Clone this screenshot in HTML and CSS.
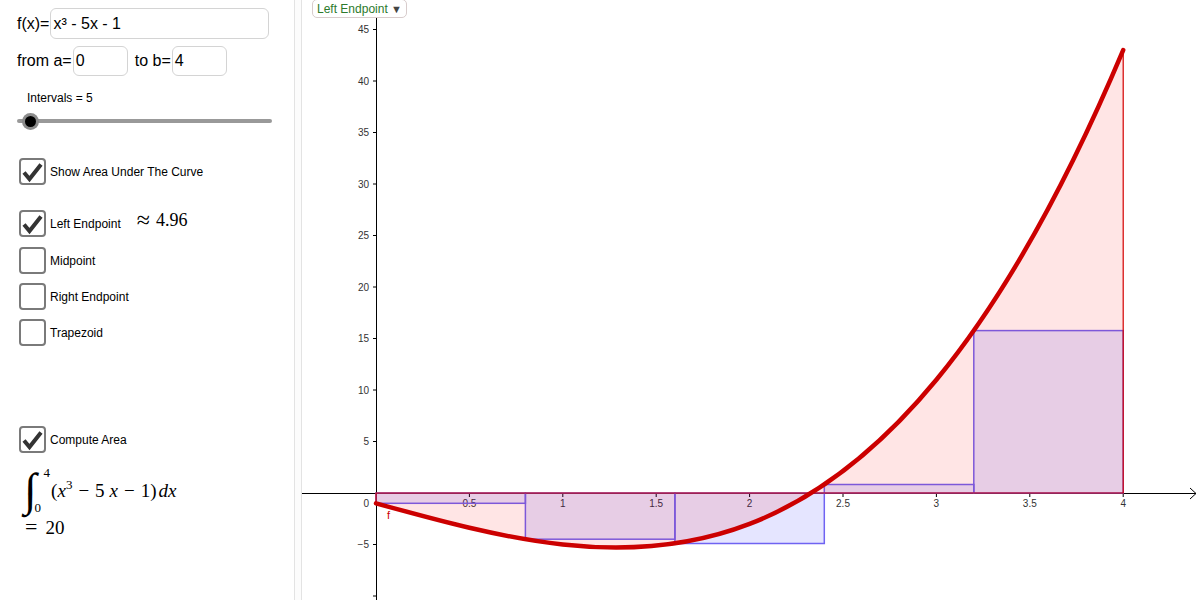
FILE: index.html
```html
<!DOCTYPE html>
<html>
<head>
<meta charset="utf-8">
<link rel="stylesheet" href="styles.css">
</head>
<body>
<div class="app">
  <aside class="panel">
    <div class="fn-row"><span class="lbl">f(x)=</span><span class="field field-wide">x³ - 5x - 1</span></div>
    <div class="ab-row"><span class="lbl">from a=</span><span class="field field-a">0</span><span class="lbl to">to b=</span><span class="field field-b">4</span></div>
    <div class="slider-label">Intervals = 5</div>
    <div class="slider"><div class="track"></div><div class="knob"></div></div>

    <div class="check c1"><span class="box"><svg viewBox="0 0 23 23" class="tick"><path d="M3 12.5 L8.5 19 L20 4.5"/></svg></span><span class="ck-label">Show Area Under The Curve</span></div>
    <div class="check c2"><span class="box"><svg viewBox="0 0 23 23" class="tick"><path d="M3 12.5 L8.5 19 L20 4.5"/></svg></span><span class="ck-label">Left Endpoint</span><span class="approx"><span class="apx-sym">≈</span>4.96</span></div>
    <div class="check c3"><span class="box"></span><span class="ck-label">Midpoint</span></div>
    <div class="check c4"><span class="box"></span><span class="ck-label">Right Endpoint</span></div>
    <div class="check c5"><span class="box"></span><span class="ck-label">Trapezoid</span></div>
    <div class="check c6"><span class="box"><svg viewBox="0 0 23 23" class="tick"><path d="M3 12.5 L8.5 19 L20 4.5"/></svg></span><span class="ck-label">Compute Area</span></div>

    <div class="integral">
      <span class="int-sign">∫</span>
      <span class="limits"><span class="up">4</span><span class="lo">0</span></span>
      <span class="expr">(<i>x</i><sup>3</sup><span class="op">−</span>5<i class="sp">x</i><span class="op">−</span>1)<i class="dx">dx</i></span>
    </div>
    <div class="result"><span class="eq">=</span>20</div>
  </aside>
  <div class="divider"></div>
  <main class="graphics">
    <div class="dropdown">Left Endpoint <span class="caret">▼</span></div>
    <svg class="plot" viewBox="302 0 898 600" width="898" height="600">
      <g class="axes" stroke="#000" stroke-width="1" fill="none">
        <line x1="376.5" y1="0" x2="376.5" y2="600"/>
        <line x1="302" y1="493.5" x2="1196" y2="493.5"/>
        <path d="M1190 488 L1196 493.5 L1190 499"/>
        <line x1="373" y1="29.5" x2="376" y2="29.5"/>
        <line x1="373" y1="81" x2="376" y2="81"/>
        <line x1="373" y1="132.5" x2="376" y2="132.5"/>
        <line x1="373" y1="184" x2="376" y2="184"/>
        <line x1="373" y1="235.5" x2="376" y2="235.5"/>
        <line x1="373" y1="287" x2="376" y2="287"/>
        <line x1="373" y1="338.5" x2="376" y2="338.5"/>
        <line x1="373" y1="390" x2="376" y2="390"/>
        <line x1="373" y1="441.5" x2="376" y2="441.5"/>
        <line x1="373" y1="544.5" x2="376" y2="544.5"/>
        <line x1="373" y1="596" x2="376" y2="596"/>
        <line x1="469.4" y1="494" x2="469.4" y2="497"/>
        <line x1="562.8" y1="494" x2="562.8" y2="497"/>
        <line x1="656.2" y1="494" x2="656.2" y2="497"/>
        <line x1="749.6" y1="494" x2="749.6" y2="497"/>
        <line x1="843" y1="494" x2="843" y2="497"/>
        <line x1="936.4" y1="494" x2="936.4" y2="497"/>
        <line x1="1029.8" y1="494" x2="1029.8" y2="497"/>
        <line x1="1123.2" y1="494" x2="1123.2" y2="497"/>
      </g>
      <g class="ylabels">
        <text x="369" y="33">45</text>
        <text x="369" y="84.5">40</text>
        <text x="369" y="136">35</text>
        <text x="369" y="187.5">30</text>
        <text x="369" y="239">25</text>
        <text x="369" y="290.5">20</text>
        <text x="369" y="342">15</text>
        <text x="369" y="393.5">10</text>
        <text x="369" y="445">5</text>
        <text x="369" y="507">0</text>
        <text x="369" y="548">−5</text>
      </g>
      <g class="xlabels">
        <text x="469.4" y="507">0.5</text>
        <text x="562.8" y="507">1</text>
        <text x="656.2" y="507">1.5</text>
        <text x="749.6" y="507">2</text>
        <text x="843" y="507">2.5</text>
        <text x="936.4" y="507">3</text>
        <text x="1029.8" y="507">3.5</text>
        <text x="1123.2" y="507">4</text>
      </g>
      <g class="rects">
        <rect x="376" y="493" width="149.4" height="10.3"/>
        <rect x="525.4" y="493" width="149.5" height="46.2"/>
        <rect x="674.9" y="493" width="149.4" height="50.5"/>
        <rect x="824.3" y="484.5" width="149.5" height="8.5"/>
        <rect x="973.8" y="330.6" width="149.4" height="162.4"/>
      </g>
      <path class="area" d="M376 493 L376 503.3 C625.07 571.97 874.13 640.63 1123.2 50.1 L1123.2 493 Z"/>
      <path class="curve" d="M376 503.3 C625.07 571.97 874.13 640.63 1123.2 50.1"/>
      <text class="flabel" x="387" y="519">f</text>
    </svg>
  </main>
</div>
</body>
</html>
```

FILE: styles.css
```css
html, body {
  margin: 0;
  padding: 0;
  background: #fff;
  font-family: "Liberation Sans", Arial, sans-serif;
  color: #000;
}

.app {
  display: flex;
  width: 1200px;
  height: 600px;
  overflow: hidden;
}

.panel {
  width: 294px;
  flex: none;
}

.divider {
  width: 6px;
  flex: none;
  border-left: 1px solid #e3e3e3;
  border-right: 1px solid #e3e3e3;
  background: #fcfcfc;
}

.graphics {
  position: relative;
  flex: 1;
  overflow: hidden;
}

/* input rows */
.fn-row,
.ab-row {
  display: flex;
  align-items: center;
  padding-left: 17px;
}

.fn-row {
  margin-top: 8px;
  height: 31px;
}

.ab-row {
  margin-top: 7px;
  height: 30px;
}

.lbl {
  font-size: 16px;
}

.to {
  margin-left: 7px;
}

.field {
  box-sizing: border-box;
  height: 100%;
  display: flex;
  align-items: center;
  margin-left: 1px;
  padding-left: 2px;
  border: 1px solid #d4d4d4;
  border-radius: 6px;
  font-size: 16px;
  background: #fff;
}

.field-wide {
  width: 219px;
}

.field-a,
.field-b {
  width: 55px;
}

/* slider */
.slider-label {
  margin-top: 16px;
  padding-left: 27px;
  font-size: 12px;
  line-height: 13px;
}

.slider {
  position: relative;
  margin: 7px 0 0 17px;
  width: 255px;
  height: 18px;
}

.track {
  position: relative;
  top: 7px;
  height: 4px;
  border-radius: 2px;
  background: #999;
}

.knob {
  position: absolute;
  left: 7.5px;
  top: 3.5px;
  width: 11px;
  height: 11px;
  border-radius: 50%;
  background: #000;
  box-shadow: 0 0 0 3px #8c8c8c;
}

/* checkboxes */
.check {
  display: flex;
  align-items: center;
  height: 27px;
  padding-left: 19px;
}

.c1 { margin-top: 28px; }
.c2 { margin-top: 25px; }
.c3 { margin-top: 10px; }
.c4 { margin-top: 9px; }
.c5 { margin-top: 9px; }
.c6 { margin-top: 80px; }

.box {
  box-sizing: border-box;
  width: 27px;
  height: 27px;
  border: 2px solid #7a7a7a;
  border-radius: 4px;
  background: #fff;
  flex: none;
}

.tick {
  display: block;
  width: 23px;
  height: 23px;
}

.tick path {
  fill: none;
  stroke: #333;
  stroke-width: 4;
  stroke-linejoin: miter;
}

.ck-label {
  margin-left: 4px;
  font-size: 12px;
}

.approx {
  margin-left: 16px;
  margin-top: -7px;
  font-family: "Liberation Serif", "Times New Roman", serif;
  font-size: 18px;
  display: flex;
  align-items: center;
}

.apx-sym {
  font-size: 24px;
  margin-right: 6px;
  line-height: 20px;
}

/* integral */
.integral {
  display: flex;
  align-items: center;
  margin-top: 12px;
  padding-left: 24px;
  height: 50px;
  font-family: "Liberation Serif", "Times New Roman", serif;
}

.int-sign {
  font-size: 46px;
  line-height: 50px;
  font-style: italic;
}

.limits {
  display: flex;
  flex-direction: column;
  justify-content: space-between;
  height: 48px;
  font-size: 13px;
  line-height: 13px;
  margin-left: -3px;
}

.limits .up {
  margin-left: 10px;
}

.limits .lo {
  margin-left: 1px;
}

.expr {
  font-size: 19px;
  margin-left: 1px;
  margin-top: 2px;
}

.expr i {
  font-style: italic;
}

.expr sup {
  font-size: 13px;
  vertical-align: 8px;
  line-height: 0;
}

.op {
  margin: 0 6px;
}

.sp {
  margin-left: 5px;
}

.dx {
  margin-left: 2px;
}

.result {
  margin-top: 1px;
  padding-left: 25px;
  font-family: "Liberation Serif", "Times New Roman", serif;
  font-size: 19px;
  line-height: 22px;
}

.eq {
  font-size: 22px;
  margin-right: 8px;
}

/* graphics */
.dropdown {
  position: absolute;
  left: 10px;
  top: -1px;
  height: 17px;
  padding: 0 4px;
  border: 1px solid #d8cccc;
  border-radius: 5px;
  background: #fff;
  color: #2c7a2c;
  font-size: 12px;
  line-height: 18px;
  z-index: 2;
}

.caret {
  color: #444;
  font-size: 11px;
  vertical-align: 0;
}

.plot {
  display: block;
}

.ylabels text {
  font-family: "Liberation Sans", Arial, sans-serif;
  font-size: 10px;
  fill: #333;
  text-anchor: end;
}

.xlabels text {
  font-family: "Liberation Sans", Arial, sans-serif;
  font-size: 10px;
  fill: #333;
  text-anchor: middle;
}

.rects rect {
  fill: rgba(0, 0, 255, 0.1);
  stroke: #6f63f2;
  stroke-width: 1.5;
}

.area {
  fill: rgba(255, 0, 0, 0.1);
  stroke: #d40000;
  stroke-width: 1.2;
}

.curve {
  fill: none;
  stroke: #cc0000;
  stroke-width: 4.5;
  stroke-linecap: round;
}

.flabel {
  font-family: "Liberation Sans", Arial, sans-serif;
  font-size: 11px;
  fill: #cc0000;
}
```
